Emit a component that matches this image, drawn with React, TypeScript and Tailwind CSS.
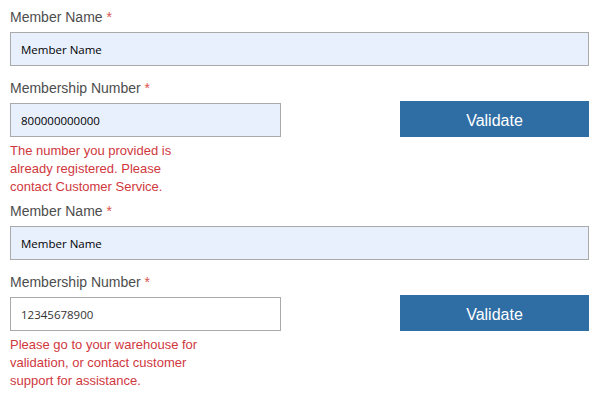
import React from "react";

type Block = {
  number: string;
  numberFilled: boolean;
  error: string;
};

const blocks: Block[] = [
  {
    number: "800000000000",
    numberFilled: true,
    error: "The number you provided is already registered. Please contact Customer Service.",
  },
  {
    number: "12345678900",
    numberFilled: false,
    error: "Please go to your warehouse for validation, or contact customer support for assistance.",
  },
];

function Label({ text }: { text: string }) {
  return (
    <div className="text-[14px] leading-[20px] text-[#4d4d4d]">
      {text} <span className="text-[#d9534f]">*</span>
    </div>
  );
}

function MemberBlock({ block }: { block: Block }) {
  return (
    <div className="flex flex-col">
      <Label text="Member Name" />
      <input
        readOnly
        value="Member Name"
        className="mt-[5px] h-[34px] w-full border border-[#aaaaaa] bg-[#e8f0fe] pl-[10px] text-[11.5px] text-black outline-none [font-family:'Open_Sans',sans-serif]"
      />
      <div className="mt-[12px]">
        <Label text="Membership Number" />
      </div>
      <div className="mt-[3px] flex items-end justify-between">
        <input
          readOnly
          value={block.number}
          className={`h-[34px] w-[271px] border border-[#aaaaaa] pl-[10px] text-[11.5px] outline-none [font-family:'Open_Sans',sans-serif] ${
            block.numberFilled ? "bg-[#e8f0fe] text-black" : "bg-white text-[#333333]"
          }`}
        />
        <button className="h-[36px] w-[189px] bg-[#2f6ea5] pt-[3px] text-[16px] text-white">
          Validate
        </button>
      </div>
      <p className="mt-[5px] w-[195px] text-[13px] leading-[18px] text-[#d0383e]">
        {block.error}
      </p>
    </div>
  );
}

export default function App() {
  return (
    <div className="h-[400px] w-[600px] bg-white px-[10px] pt-[7px] pr-[11px] font-['Liberation_Sans',Arial,sans-serif]">
      <div className="flex flex-col gap-[5px]">
        {blocks.map((b) => (
          <MemberBlock key={b.number} block={b} />
        ))}
      </div>
    </div>
  );
}
